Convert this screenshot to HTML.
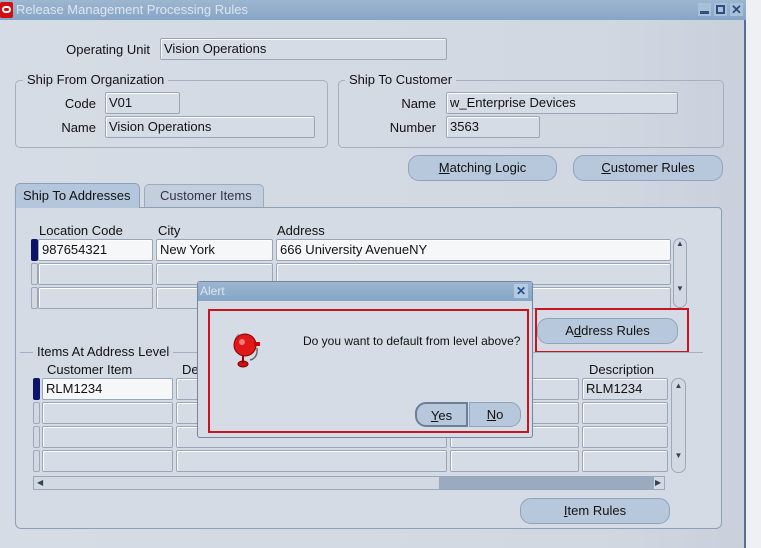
<!DOCTYPE html>
<html><head><meta charset="utf-8"><style>
*{box-sizing:border-box;margin:0;padding:0}
body{width:761px;height:548px;background:#eef0f3;font-family:"Liberation Sans",sans-serif;font-size:13px;color:#111;position:relative;overflow:hidden}
.a{position:absolute}
.win{left:0;top:0;width:746px;height:548px;background:linear-gradient(90deg,#d6dce5,#d2d8e2 80%,#c9d0db);border-right:2px solid #56708f}
.title{left:0;top:0;width:746px;height:20px;background:linear-gradient(#9db6d0,#86a5c6);color:#dde6f0;font-size:13px;line-height:20px;padding-left:16px}
.f{background:#d6dce6;border:1px solid #98a6b6;border-radius:2px;height:22px;line-height:20px;padding-left:3px;box-shadow:inset 1px 1px 0 #fff}
.w{background:#f6f7f9}
.g{border:1px solid #a3b0c0;border-radius:5px}
.lg{background:#d4dae4;padding:0 4px;line-height:14px}
.btn{background:#b7c8dc;border:1px solid #8ea3bc;border-radius:11px;text-align:center;line-height:24px;height:26px}
.r{text-align:right}
.red{border:2px solid #c8141e}
.sb{background:#d3d9e3;border:1px solid #9aa8ba;border-radius:7px}
</style></head><body>
<div class="a win"></div>
<div class="a title">Release Management Processing Rules</div>
<div class="a" style="left:0;top:2px;width:13px;height:16px;background:#d01010;border-radius:2px"><div style="margin:4px 2px;width:9px;height:7px;border:2px solid #fff;border-radius:4px"></div></div>
<div class="a" style="left:698px;top:3px;width:13px;height:13px;background:#a9c0da"><div style="margin:8px 2px 0;height:3px;background:#2d4f7d"></div></div>
<div class="a" style="left:714px;top:3px;width:13px;height:13px;background:#a9c0da;padding:2px"><div style="width:9px;height:9px;border:2px solid #2d4f7d"></div></div>
<div class="a" style="left:730px;top:3px;width:13px;height:13px;background:#a9c0da;color:#2d4f7d;font-weight:bold;font-size:13px;line-height:13px;text-align:center">✕</div>

<div class="a r" style="left:40px;top:42px;width:110px">Operating Unit</div>
<div class="a f" style="left:160px;top:38px;width:287px">Vision Operations</div>

<div class="a g" style="left:15px;top:80px;width:313px;height:68px"></div>
<div class="a lg" style="left:23px;top:73px">Ship From Organization</div>
<div class="a r" style="left:40px;top:96px;width:56px">Code</div>
<div class="a f" style="left:105px;top:92px;width:75px">V01</div>
<div class="a r" style="left:40px;top:120px;width:56px">Name</div>
<div class="a f" style="left:105px;top:116px;width:210px">Vision Operations</div>

<div class="a g" style="left:338px;top:80px;width:386px;height:68px"></div>
<div class="a lg" style="left:345px;top:73px">Ship To Customer</div>
<div class="a r" style="left:370px;top:96px;width:66px">Name</div>
<div class="a f" style="left:446px;top:92px;width:232px">w_Enterprise Devices</div>
<div class="a r" style="left:370px;top:120px;width:66px">Number</div>
<div class="a f" style="left:446px;top:116px;width:94px">3563</div>

<div class="a btn" style="left:408px;top:155px;width:149px"><u>M</u>atching Logic</div>
<div class="a btn" style="left:573px;top:155px;width:150px"><u>C</u>ustomer Rules</div>

<div class="a" style="left:15px;top:207px;width:707px;height:322px;border:1px solid #8ea0b6;border-radius:0 4px 6px 6px;background:#d5dbe5"></div>
<div class="a" style="left:15px;top:183px;width:125px;height:25px;background:#b4c6db;border:1px solid #8ea0b6;border-bottom:none;border-radius:5px 5px 0 0;line-height:24px;padding-left:7px">Ship To Addresses</div>
<div class="a" style="left:144px;top:184px;width:120px;height:23px;background:#c3cfdd;border:1px solid #9aabbf;border-bottom:none;border-radius:5px 5px 0 0;line-height:22px;padding-left:15px;color:#334">Customer Items</div>

<div class="a" style="left:39px;top:223px">Location Code</div>
<div class="a" style="left:158px;top:223px">City</div>
<div class="a" style="left:277px;top:223px">Address</div>
<div class="a" style="left:31px;top:239px;width:7px;height:22px;background:#0b1468;border-radius:2px"></div>
<div class="a f w" style="left:38px;top:239px;width:115px">987654321</div>
<div class="a f w" style="left:156px;top:239px;width:117px">New York</div>
<div class="a f w" style="left:276px;top:239px;width:395px">666 University AvenueNY</div>
<div class="a sb" style="left:31px;top:263px;width:7px;height:22px;border-radius:2px"></div>
<div class="a f" style="left:38px;top:263px;width:115px"></div>
<div class="a f" style="left:156px;top:263px;width:117px"></div>
<div class="a f" style="left:276px;top:263px;width:395px"></div>
<div class="a sb" style="left:31px;top:287px;width:7px;height:22px;border-radius:2px"></div>
<div class="a f" style="left:38px;top:287px;width:115px"></div>
<div class="a f" style="left:156px;top:287px;width:117px"></div>
<div class="a f" style="left:276px;top:287px;width:395px"></div>
<div class="a sb" style="left:673px;top:238px;width:14px;height:70px;font-size:8px;text-align:center;color:#345">▲<br><br><br><br><br>▼</div>

<div class="a btn" style="left:537px;top:318px;width:141px">A<u>d</u>dress Rules</div>
<div class="a red" style="left:535px;top:308px;width:154px;height:45px"></div>

<div class="a" style="left:20px;top:352px;width:683px;border-top:1px solid #a3b0c0"></div>
<div class="a lg" style="left:33px;top:345px">Items At Address Level</div>
<div class="a" style="left:47px;top:362px">Customer Item</div>
<div class="a" style="left:182px;top:362px">De</div>
<div class="a" style="left:589px;top:362px">Description</div>
<div class="a" style="left:33px;top:378px;width:7px;height:22px;background:#0b1468;border-radius:2px"></div>
<div class="a f w" style="left:42px;top:378px;width:131px">RLM1234</div>
<div class="a f" style="left:176px;top:378px;width:271px"></div>
<div class="a f" style="left:450px;top:378px;width:129px"></div>
<div class="a f" style="left:582px;top:378px;width:86px">RLM1234</div>
<div class="a sb" style="left:33px;top:402px;width:7px;height:22px;border-radius:2px"></div>
<div class="a f" style="left:42px;top:402px;width:131px"></div>
<div class="a f" style="left:176px;top:402px;width:271px"></div>
<div class="a f" style="left:450px;top:402px;width:129px"></div>
<div class="a f" style="left:582px;top:402px;width:86px"></div>
<div class="a sb" style="left:33px;top:426px;width:7px;height:22px;border-radius:2px"></div>
<div class="a f" style="left:42px;top:426px;width:131px"></div>
<div class="a f" style="left:176px;top:426px;width:271px"></div>
<div class="a f" style="left:450px;top:426px;width:129px"></div>
<div class="a f" style="left:582px;top:426px;width:86px"></div>
<div class="a sb" style="left:33px;top:450px;width:7px;height:22px;border-radius:2px"></div>
<div class="a f" style="left:42px;top:450px;width:131px"></div>
<div class="a f" style="left:176px;top:450px;width:271px"></div>
<div class="a f" style="left:450px;top:450px;width:129px"></div>
<div class="a f" style="left:582px;top:450px;width:86px"></div>
<div class="a sb" style="left:671px;top:378px;width:15px;height:95px;font-size:8px;text-align:center;color:#345;line-height:10px;padding-top:2px">▲<br><br><br><br><br><br><br>▼</div>
<div class="a" style="left:33px;top:476px;width:632px;height:14px;background:#d3d9e3;border:1px solid #9aa8ba;font-size:8px;color:#345;line-height:12px;padding-left:3px">◀</div>
<div class="a" style="left:439px;top:477px;width:215px;height:12px;background:#9aabbf"></div>
<div class="a" style="left:655px;top:477px;font-size:8px;color:#345;line-height:12px">▶</div>

<div class="a btn" style="left:520px;top:498px;width:150px"><u>I</u>tem Rules</div>

<!-- alert -->
<div class="a" style="left:197px;top:281px;width:336px;height:157px;background:#d6dce5;border:1px solid #6f87a5;border-radius:3px"></div>
<div class="a" style="left:198px;top:282px;width:334px;height:19px;background:linear-gradient(#9db6d0,#86a5c6);color:#dde6f0;line-height:19px;padding-left:2px;font-size:12px">Alert</div>
<div class="a" style="left:514px;top:284px;width:14px;height:14px;background:#b7cbe0;color:#1e4f8f;font-weight:bold;font-size:12px;line-height:14px;text-align:center">✕</div>
<div class="a red" style="left:208px;top:309px;width:321px;height:124px"></div>
<svg class="a" style="left:230px;top:330px" width="34" height="40">
<path d="M5 10 A11 11 0 0 1 9 4" stroke="#888" fill="none"/>
<path d="M20 30 Q28 28 27 18" stroke="#666" stroke-width="1.5" fill="none"/>
<circle cx="15" cy="15" r="11" fill="#e01818" stroke="#800" stroke-width="1"/>
<circle cx="12" cy="12" r="3" fill="#f77"/>
<rect x="24" y="12" width="6" height="4" fill="#c00"/>
<ellipse cx="13" cy="34" rx="5" ry="3" fill="#d01010" stroke="#700"/>
<rect x="12" y="25" width="2" height="8" fill="#900"/>
</svg>
<div class="a" style="left:303px;top:334px;font-size:12px">Do you want to default from level above?</div>
<div class="a btn" style="left:415px;top:402px;width:53px;height:25px;line-height:23px;border:2px solid #6b7f99;border-radius:11px 0 0 11px"><u>Y</u>es</div>
<div class="a btn" style="left:469px;top:402px;width:52px;height:25px;line-height:23px;border-radius:0 11px 11px 0"><u>N</u>o</div>
</body></html>
